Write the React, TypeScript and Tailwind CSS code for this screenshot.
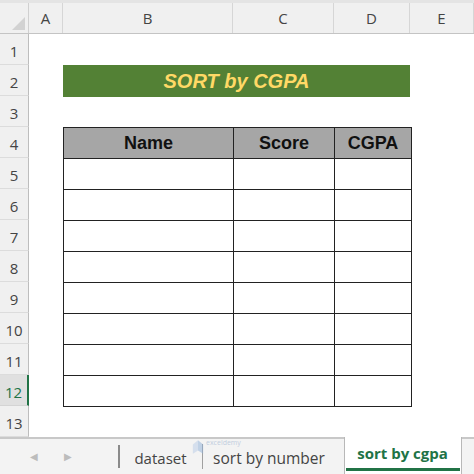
const cols = [
  { label: "A", w: "w-[34px]" },
  { label: "B", w: "w-[170px]" },
  { label: "C", w: "w-[101px]" },
  { label: "D", w: "w-[76px]" },
  { label: "E", w: "w-[64px]" },
]

const rows = Array.from({ length: 13 }, (_, i) => i + 1)

const RowHeader = ({ n }: { n: number }) => {
  const active = n === 12
  return (
    <div
      className={
        active
          ? "h-[31px] flex items-center justify-center bg-[#e0e0e0] text-[#217346] border-b border-[#d4d4d4] border-r-2 border-r-[#217346]"
          : "h-[31px] flex items-center justify-center text-[#444] border-b border-[#dcdcdc] border-r border-r-[#bdbdbd]"
      }
    >
      <span className="text-[15px] pt-[5px]">{n}</span>
    </div>
  )
}

export default function App() {
  const body = ["Name", "Score", "CGPA"]
  return (
    <div
      className="w-[474px] h-[474px] flex flex-col bg-white overflow-hidden"
      style={{ fontFamily: '"Open Sans", "Liberation Sans", sans-serif' }}
    >
      <div className="h-[3px] bg-[#e4e4e4]" />

      {/* column headers */}
      <div className="h-[31px] flex bg-[#f0f0f0] border-b border-[#c4c4c4]">
        <div className="w-[29px] relative border-r border-[#d0d0d0]">
          <svg className="absolute right-[3px] bottom-[3px]" width="13" height="13" viewBox="0 0 13 13">
            <polygon points="13,0 13,13 0,13" fill="#d2d2d2" />
          </svg>
        </div>
        {cols.map((c) => (
          <div
            key={c.label}
            className={`${c.w} flex items-center justify-center text-[15px] text-[#444] border-r border-[#d6d6d6]`}
          >
            {c.label}
          </div>
        ))}
      </div>

      {/* grid body */}
      <div className="h-[403px] flex">
        <div className="w-[29px] bg-[#f0f0f0] flex flex-col">
          {rows.map((n) => (
            <RowHeader key={n} n={n} />
          ))}
        </div>
        <div className="flex-1 flex flex-col pl-[34px]">
          <div className="h-[31px]" />
          <div className="h-[32px] w-[347px] bg-[#538135] flex items-center justify-center">
            <span
              className="text-[20px] font-bold italic text-[#ffd966]"
              style={{ fontFamily: '"Liberation Sans", Arial, sans-serif' }}
            >
              SORT by CGPA
            </span>
          </div>
          <div className="h-[30px]" />
          <table
            className="border-collapse w-[348px] table-fixed"
            style={{ fontFamily: '"Liberation Sans", Arial, sans-serif' }}
          >
            <colgroup>
              <col className="w-[170px]" />
              <col className="w-[101px]" />
              <col className="w-[77px]" />
            </colgroup>
            <thead>
              <tr className="h-[31px] bg-[#a6a6a6]">
                {body.map((h) => (
                  <th key={h} className="border-[1.5px] border-[#222] text-[18px] font-bold text-[#111] p-0">
                    {h}
                  </th>
                ))}
              </tr>
            </thead>
            <tbody>
              {Array.from({ length: 8 }, (_, i) => (
                <tr key={i} className="h-[31px]">
                  <td className="border-[1.5px] border-[#222] p-0" />
                  <td className="border-[1.5px] border-[#222] p-0" />
                  <td className="border-[1.5px] border-[#222] p-0" />
                </tr>
              ))}
            </tbody>
          </table>
        </div>
      </div>

      {/* sheet tabs */}
      <div className="h-[37px] flex items-stretch bg-[#f3f3f3] border-t-2 border-[#c8c8c8] relative">
        <div className="w-[118px] flex items-center">
          <span className="ml-[30px] text-[10px] text-[#bcbcbc]">◀</span>
          <span className="ml-[26px] text-[10px] text-[#bcbcbc]">▶</span>
        </div>
        <div className="w-[1.5px] my-[6px] bg-[#8a8a8a]" />
        <div className="w-[82px] flex items-center justify-center text-[15px] leading-[18px] text-[#444] pt-[3px]">dataset</div>
        <div className="w-[1px] my-[5px] bg-[#a0a0a0]" />
        <div className="w-[141px] flex items-center justify-center text-[15.5px] leading-[18px] text-[#444] pt-[3px] pr-[8px]">sort by number</div>
        <div className="w-[118px] -mt-[2px] bg-white border-x border-[#b8b8b8] flex flex-col">
          <div className="flex-1 flex items-center justify-center text-[15px] font-bold text-[#217346] pt-[2px]">sort by cgpa</div>
          <div className="h-[3px] bg-[#217346] mb-[3px] mx-[1px]" />
        </div>
        {/* watermark */}
        <div className="absolute left-[192px] top-0 flex items-start gap-[2px] opacity-50 pointer-events-none">
          <svg width="12" height="16" viewBox="0 0 14 18">
            <polygon points="7,1 13,6 13,17 7,13" fill="#8fb0d9" />
            <polygon points="7,1 1,6 1,17 7,13" fill="#b9cde8" />
          </svg>
          <span className="text-[7px] leading-[7px] text-[#8fa9cc]">exceldemy</span>
        </div>
      </div>
    </div>
  )
}
